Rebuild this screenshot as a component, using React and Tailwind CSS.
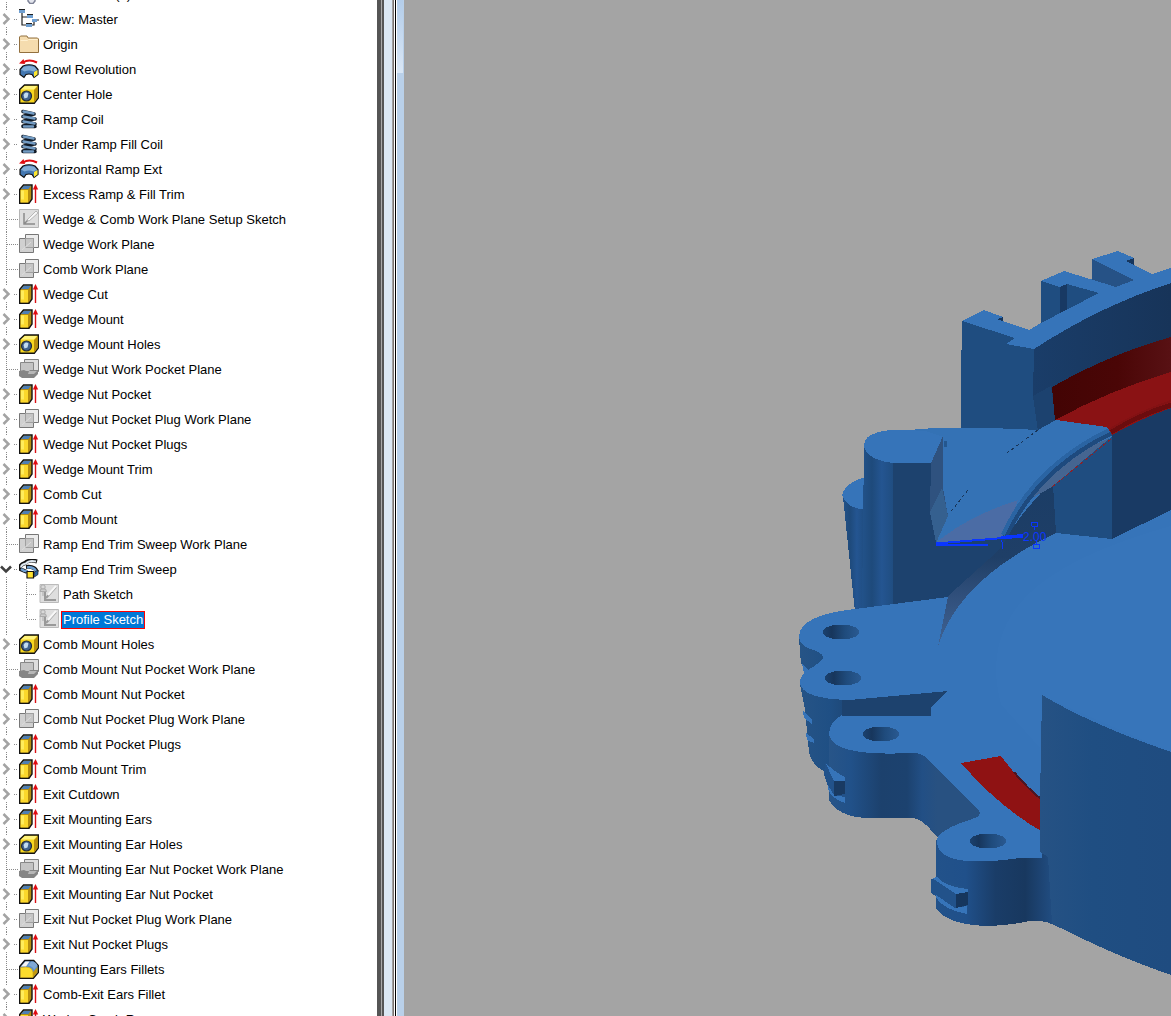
import React from 'react';

const tree = [
  { label: 'Solid Bodies(1)', icon: 'bodies', expand: true },
  { label: 'View: Master', icon: 'view', expand: true },
  { label: 'Origin', icon: 'folder', expand: true },
  { label: 'Bowl Revolution', icon: 'revolve', expand: true },
  { label: 'Center Hole', icon: 'hole', expand: true },
  { label: 'Ramp Coil', icon: 'coil', expand: true },
  { label: 'Under Ramp Fill Coil', icon: 'coil', expand: true },
  { label: 'Horizontal Ramp Ext', icon: 'revolve', expand: true },
  { label: 'Excess Ramp & Fill Trim', icon: 'extrude', expand: true },
  { label: 'Wedge & Comb Work Plane Setup Sketch', icon: 'sketch' },
  { label: 'Wedge Work Plane', icon: 'plane' },
  { label: 'Comb Work Plane', icon: 'plane' },
  { label: 'Wedge Cut', icon: 'extrude', expand: true },
  { label: 'Wedge Mount', icon: 'extrude', expand: true },
  { label: 'Wedge Mount Holes', icon: 'hole', expand: true },
  { label: 'Wedge Nut Work Pocket Plane', icon: 'planeBody' },
  { label: 'Wedge Nut Pocket', icon: 'extrude', expand: true },
  { label: 'Wedge Nut Pocket Plug Work Plane', icon: 'plane', expand: true },
  { label: 'Wedge Nut Pocket Plugs', icon: 'extrude', expand: true },
  { label: 'Wedge Mount Trim', icon: 'extrude', expand: true },
  { label: 'Comb Cut', icon: 'extrude', expand: true },
  { label: 'Comb Mount', icon: 'extrude', expand: true },
  { label: 'Ramp End Trim Sweep Work Plane', icon: 'plane' },
  {
    label: 'Ramp End Trim Sweep',
    icon: 'sweep',
    expand: true,
    children: [
      { label: 'Path Sketch', icon: 'sharedSketch' },
      { label: 'Profile Sketch', icon: 'sharedSketch', selected: true },
    ],
  },
  { label: 'Comb Mount Holes', icon: 'hole', expand: true },
  { label: 'Comb Mount Nut Pocket Work Plane', icon: 'planeBody' },
  { label: 'Comb Mount Nut Pocket', icon: 'extrude', expand: true },
  { label: 'Comb Nut Pocket Plug Work Plane', icon: 'plane', expand: true },
  { label: 'Comb Nut Pocket Plugs', icon: 'extrude', expand: true },
  { label: 'Comb Mount Trim', icon: 'extrude', expand: true },
  { label: 'Exit Cutdown', icon: 'extrude', expand: true },
  { label: 'Exit Mounting Ears', icon: 'extrude', expand: true },
  { label: 'Exit Mounting Ear Holes', icon: 'hole', expand: true },
  { label: 'Exit Mounting Ear Nut Pocket Work Plane', icon: 'planeBody' },
  { label: 'Exit Mounting Ear Nut Pocket', icon: 'extrude', expand: true },
  { label: 'Exit Nut Pocket Plug Work Plane', icon: 'plane', expand: true },
  { label: 'Exit Nut Pocket Plugs', icon: 'extrude', expand: true },
  { label: 'Mounting Ears Fillets', icon: 'fillet' },
  { label: 'Comb-Exit Ears Fillet', icon: 'extrude', expand: true },
  { label: 'Wedge Comb Ramp', icon: 'extrude', expand: true },
];

const icons = {
  bodies: (
    <path d="M2 3h8v8H2zM9 12v5l2 2.500h3l2-2.500v-5z" fill="#e4e6ee" stroke="#7d8296" strokeWidth="1.5" />
  ),
  view: (
    <>
      <path d="M3 4v12h4M3 8h5M14 11h6M13 16h2v-4" fill="none" stroke="#222" strokeWidth="1.2" />
      <path d="M0 1h6v3H0zM8 6h6v3H8zM7 15h6v3H7zM13 10h5v3h-5z" fill="#6f9fd0" />
      <path d="M0 .5h6M8 5.5h6M7 14.5h6" stroke="#222" />
    </>
  ),
  folder: (
    <>
      <path d="M.5 18.500V3l1-1H8l1 2h9.500l1 1v13.500z" fill="#f5dcae" stroke="#92703f" />
      <path d="M1.500 6.500h7l1-1h9" fill="none" stroke="#fff0cf" />
    </>
  ),
  revolve: (
    <>
      <path d="M4 3.500Q10-.5 18 3.500" fill="none" stroke="#e00d12" strokeWidth="2" />
      <path d="M0 4.500L4.500 0 6 5z" fill="#e00d12" />
      <path d="M1 10.500L4 7q6-2.500 12 0l3 3.500v5L15 18.500l-2-3q-3-1-6 0l-2 3L1 15.500z" fill="#4377b0" stroke="#111" strokeWidth="1.200" />
      <path d="M2 10.500L4.500 8q5.500-2 11 0l2.500 2.500-3.500 2q-4.500-2-9 0z" fill="#83add6" />
      <path d="M15 13l3.500-2v4.500L15 18z" fill="#ffe72d" />
    </>
  ),
  hole: (
    <>
      <path d="M.7 5.500l4.800-4.500h13.800v13l-4 5.300H.7z" fill="#f6d51e" stroke="#111" strokeWidth="1.400" />
      <path d="M2 5.500l4-3.500h12l-3 3.500z" fill="#fff37c" />
      <path d="M15 6l3.500-3.500V14L15 18.500z" fill="#b98d0d" />
      <circle cx="7.500" cy="12" r="5" fill="#3f628e" stroke="#222b3a" strokeWidth="1.200" />
      <path d="M4.500 11q2-4 5-1.500l-1 4-3 1z" fill="#c3dcf0" />
    </>
  ),
  coil: (
    <>
      <path d="M4 2.500L15 5M15 5L5 7M4 7.500L16 10M15 10L5 12M4 12.500L16 15M15 15L4 17M4 17.500h12" fill="none" stroke="#111a26" strokeWidth="3.600" strokeLinecap="round" />
      <path d="M4.500 2.500L14.500 4.500M4.500 7.500L15.500 9.500M4.500 12.500L15.500 14.500M5 17.500h9" fill="none" stroke="#739cc4" strokeWidth="2.400" strokeLinecap="round" />
    </>
  ),
  extrude: (
    <>
      <path d="M.7 5.500L4.500 1H13v14l-3 4.300H.7z" fill="#b48c10" stroke="#111" strokeWidth="1.400" />
      <path d="M2 5l3-3.300h7L9.500 5z" fill="#4d7fb6" />
      <path d="M1.500 6H9v12.500H1.500z" fill="#fbd72b" />
      <path d="M2 6.500h3v9H2z" fill="#ffec5c" />
      <path d="M16.500 19V3" stroke="#da1015" strokeWidth="1.400" />
      <path d="M13.800 5.500L16.500 0l2.700 5.500z" fill="#e00d12" />
    </>
  ),
  sketch: (
    <>
      <path d="M.5.500h19v18H.5z" fill="#dedede" stroke="#b5b5b5" />
      <path d="M5 4v11h11M5 15l5-5" fill="none" stroke="#8b8b8b" strokeWidth="1.500" />
      <path d="M8 11l9-9 2 2-9 8z" fill="#f7f7f7" stroke="#aaa" strokeWidth=".8" />
    </>
  ),
  plane: (
    <>
      <path d="M6.500.5h13v13h-13z" fill="#ececec" stroke="#777" />
      <path d="M.5 4.500h14v14H.5z" fill="#d0d0d0" stroke="#777" />
      <path d="M6.500 4.500h8v9h-8z" fill="#c6c6c6" stroke="#a0a0a0" />
      <path d="M3 16l9-8" stroke="#ddd" />
    </>
  ),
  planeBody: (
    <>
      <path d="M5.500.5h14v12h-14z" fill="#dedede" stroke="#808080" />
      <path d="M1.500 3.500h13v9h-13z" fill="#c4c4c4" stroke="#888" />
      <path d="M0 12l5-1 4 2 2-2h8v4l-4 4H3l-3-2z" fill="#858585" />
      <path d="M10 12h8l-3 3H9z" fill="#b7b7b7" />
    </>
  ),
  sweep: (
    <>
      <path d="M18 2.500Q10 0 6 4q-6 2-5 6l7 3M7 8q9-1 11 5" fill="none" stroke="#111" strokeWidth="4" strokeLinejoin="round" />
      <path d="M17 2.500Q10 1 7 4.500q-5 1-5 4" fill="none" stroke="#dfe9f2" strokeWidth="2" />
      <path d="M2 10q3 2.500 7 2.500M8 8.500q6-1 9 3.500v3" fill="none" stroke="#6d9ed0" strokeWidth="2.400" />
      <path d="M8 12.500h6.500v6.500H8z" fill="#ffe22f" stroke="#111" strokeWidth="1.200" />
      <path d="M15.500 13l3.500-2v4.500L15.500 18z" fill="#2c629d" stroke="#111" strokeWidth=".6" />
    </>
  ),
  sharedSketch: (
    <>
      <path d="M1 .5h18.500v18H1z" fill="#dedede" stroke="#bbb" />
      <path d="M6 8v8h11M7 14l10-11" fill="none" stroke="#999" strokeWidth="2" />
      <circle cx="4" cy="3" r="2.200" fill="#d9d9d9" stroke="#aaa" />
      <path d="M1 7.500h6.500L6.500 5h-4.500zM4 7v5" fill="#ccc" stroke="#aaa" />
      <path d="M9 11l8-9" stroke="#f8f8f8" strokeWidth="2" />
    </>
  ),
  fillet: (
    <>
      <path d="M.7 7.500l5-6h9l4.600 5v7l-5 5.800H.7z" fill="#5d8fc7" stroke="#111" strokeWidth="1.400" />
      <path d="M2 7.500l4.500-5h4L7 7.500z" fill="#f5f5f5" />
      <path d="M9 6.500l3.500-4q4.500 0 6 4l-3.500 4.500q-1-4-6-4.500z" fill="#7fa8d6" />
      <path d="M14 13l4.500-5v5.500L14 18.500z" fill="#c39a10" />
      <path d="M1.500 8.500q12-2 12.500 5v5H1.500z" fill="#fbdc2d" stroke="#c79d12" strokeWidth=".6" />
    </>
  ),
};

function FeatureIcon({ name }) {
  return (
    <svg className="mb-0.5 h-5 w-5 shrink-0" viewBox="0 0 20 20" aria-hidden="true">
      {icons[name]}
    </svg>
  );
}

function Branch({ expand, open }) {
  return (
    <svg className="h-[25px] w-[19px] shrink-0" viewBox="0 0 19 25" shapeRendering="crispEdges">
      <g stroke="#8a8a8a" strokeDasharray="1 1">
        <path d={expand ? 'M6.500 0v4M6.500 20v5' : 'M6.500 0v25'} />
        <path d={expand ? 'M14 12.500h4' : 'M7 12.500h11'} />
      </g>
      {expand && (
        <path
          d={open ? 'M1 9.500l5 5 5-5' : 'M3.500 7l5 5-5 5'}
          fill="none"
          stroke={open ? '#404040' : '#a3a3a3'}
          strokeWidth="2.5"
          shapeRendering="auto"
        />
      )}
    </svg>
  );
}

function ChildBranch({ last }) {
  return (
    <svg className="h-[25px] w-[39px] shrink-0" viewBox="0 0 39 25" shapeRendering="crispEdges">
      <g stroke="#8a8a8a" strokeDasharray="1 1">
        <path d="M6.500 0v25" />
        <path d={last ? 'M26.500 0v12' : 'M26.500 0v25'} />
        <path d="M27 12.500h10" />
      </g>
    </svg>
  );
}

function TreeRow({ item, child, last }) {
  return (
    <div className="flex h-[25px] items-center whitespace-nowrap">
      {child && <ChildBranch last={last} />}
      {!child && item.expand && (
        <button aria-label={`Toggle ${item.label}`} className="shrink-0">
          <Branch expand open={Boolean(item.children)} />
        </button>
      )}
      {!child && !item.expand && <Branch />}
      <FeatureIcon name={item.icon} />
      {item.selected ? (
        <button className="ml-0.5 h-[18px] border border-[#ff0000] bg-[#0078d7] px-px text-white">
          {item.label}
        </button>
      ) : (
        <button className="ml-1">{item.label}</button>
      )}
    </div>
  );
}

function FeatureTree() {
  return (
    <aside className="w-[377px] shrink-0 overflow-hidden bg-white text-[13px] leading-4 text-black">
      <ul className="-mt-[18px]">
        {tree.map((item) => (
          <li key={item.label}>
            <TreeRow item={item} />
            {item.children && (
              <ul>
                {item.children.map((c, i) => (
                  <li key={c.label}>
                    <TreeRow item={c} child last={i === item.children.length - 1} />
                  </li>
                ))}
              </ul>
            )}
          </li>
        ))}
      </ul>
    </aside>
  );
}

function Splitter() {
  return (
    <div className="flex shrink-0">
      <div className="w-1 bg-[#555555]" />
      <div className="w-px bg-[#a8a8a8]" />
      <div className="w-0.5 bg-[#555555]" />
      <div className="w-2 bg-[#dbe7f3]" />
      <div className="w-px bg-[#a0a0a0]" />
      <div className="w-px bg-[#7c7472]" />
      <div className="w-px bg-white" />
      <div className="w-px bg-black" />
      <div className="w-px bg-white" />
      <div className="w-[7px] bg-[#b9d0e9]">
        <div className="h-[73px] w-1.5 bg-linear-to-b from-[#b3cdea] to-[#dae7f5]" />
      </div>
    </div>
  );
}

function Hole({ cx, cy }) {
  return <ellipse cx={cx} cy={cy} rx="18.500" ry="7.500" fill="url(#bore)" />;
}

function Model() {
  return (
    <svg
      className="block h-full w-full"
      viewBox="404 0 767 1016"
      preserveAspectRatio="xMinYMin slice"
      shapeRendering="crispEdges"
      role="img"
      aria-label="Bowl model"
    >
      <defs>
        <linearGradient id="bore">
          <stop offset="0" stopColor="#1b4270" />
          <stop offset=".25" stopColor="#17365c" />
          <stop offset=".6" stopColor="#1f4b7c" />
          <stop offset="1" stopColor="#2a5a92" />
        </linearGradient>
        <linearGradient id="cyl">
          <stop offset="0" stopColor="#22528a" />
          <stop offset=".3" stopColor="#1e4a7b" />
          <stop offset=".6" stopColor="#245591" />
          <stop offset="1" stopColor="#1f4c7e" />
        </linearGradient>
        <linearGradient id="earA" gradientUnits="userSpaceOnUse" x1="800" y1="0" x2="860" y2="0">
          <stop offset="0" stopColor="#265486" />
          <stop offset=".5" stopColor="#1f4f84" />
          <stop offset="1" stopColor="#1d426e" />
        </linearGradient>
        <linearGradient id="earB" gradientUnits="userSpaceOnUse" x1="828" y1="0" x2="980" y2="0">
          <stop offset="0" stopColor="#285588" />
          <stop offset=".15" stopColor="#215189" />
          <stop offset=".35" stopColor="#1c416d" />
          <stop offset=".52" stopColor="#1c426f" />
          <stop offset=".62" stopColor="#224f85" />
          <stop offset=".72" stopColor="#285181" />
          <stop offset="1" stopColor="#285181" />
        </linearGradient>
        <linearGradient id="earC" gradientUnits="userSpaceOnUse" x1="936" y1="0" x2="1055" y2="0">
          <stop offset="0" stopColor="#22528a" />
          <stop offset=".25" stopColor="#20508a" />
          <stop offset=".5" stopColor="#1a3d68" />
          <stop offset=".75" stopColor="#18385f" />
          <stop offset="1" stopColor="#224f85" />
        </linearGradient>
        <linearGradient id="wall">
          <stop offset="0" stopColor="#1a3d69" />
          <stop offset="1" stopColor="#173459" />
        </linearGradient>
        <linearGradient id="redWall">
          <stop offset="0" stopColor="#430404" />
          <stop offset=".55" stopColor="#4a0606" />
          <stop offset="1" stopColor="#581114" />
        </linearGradient>
        <linearGradient id="outer">
          <stop offset="0" stopColor="#265284" />
          <stop offset=".4" stopColor="#1f4e82" />
          <stop offset="1" stopColor="#1f4c80" />
        </linearGradient>
        <linearGradient id="lip" x1="0" y1="0" x2="0" y2="1">
          <stop offset="0" stopColor="#1b3d66" />
          <stop offset=".45" stopColor="#1f3f67" />
          <stop offset=".7" stopColor="#31507c" />
          <stop offset="1" stopColor="#3f6394" />
        </linearGradient>
      </defs>

      {/* comb teeth and rear wall */}
      <path d="M962 321L1015 336 1034 345V395L1038 432H961V380z" fill="#1f4d80" />
      <path d="M1041 281L1099 293 1041 326z" fill="#1f4d80" />
      <path d="M1060 287L1067 284V312L1060 316z" fill="#183963" />
      <path d="M1067 284L1102 293 1067 313z" fill="#1f4d80" />
      <path d="M1092 259L1136 279 1116 288 1092 281z" fill="#265286" />
      <path d="M1125 261L1134 258V266z" fill="#16365d" />
      <path d="M995 319L1003 317V322z" fill="#16365d" />
      <path d="M962 321L984 310 1003 317 997 319 1029 330 1041 323 1099 293 1067 284 1060 287 1041 281 1064 271 1116 287 1134 280 1092 259 1118 251 1134 258 1126 261 1152 274 1171 268V284Q1100 306 1034 349L1006 344 1015 338z" fill="#3674b9" />
      <path d="M1034 349Q1100 306 1171 283V345L1060 400 1058 421 1038 431 1033 395z" fill="url(#wall)" />
      <path d="M1033 396L1051 386 1056 421 1038 431z" fill="#1c426f" />

      {/* right hand block and bowl floor */}
      <path d="M1112 430L1171 400V514L1112 541z" fill="#193a64" />
      <path d="M1112 432V540L1054 534 1050 485z" fill="#1f4d80" />
      <path d="M1056 533L1112 539 1171 510V760H1042L1000 860 940 846 931 700 936 640 975 575 1030 535z" fill="#3674b9" />
      <path d="M1171 526Q1050 560 1015 610T1010 730Q1025 765 1040 780V695L1171 752z" fill="#3775ba" />

      {/* red ramp on the bowl wall */}
      <path d="M1052 387Q1110 354 1171 337V375Q1110 394 1055 421z" fill="url(#redWall)" />
      <path d="M1055 420Q1110 390 1171 372V408Q1140 419 1112 435L1105 427z" fill="#8a1214" />
      <path d="M1111 432Q1138 415 1171 405" fill="none" stroke="#6b0c0e" strokeWidth="5" />
      <path d="M1110 429Q1138 412 1171 401" fill="none" stroke="#831113" strokeWidth="2" />

      {/* posts */}
      <path d="M843 497L866 490V612H855z" fill="url(#cyl)" />
      <path d="M842 495Q846 482 866 477V510Q846 508 842 495z" fill="#3674b9" />
      <path d="M864 445H895V610H862z" fill="url(#cyl)" />
      <path d="M893 455H933L936 543 1004 537 1034 496 1003 547 948 600 893 605z" fill="#1d426e" />
      <path d="M1000 549L1034 494 1053 485 1056 533Q960 578 938 646 938 622 947 597z" fill="url(#lip)" />
      <path d="M903 431Q940 425 1038 430L1056 420 1107 427 1112 437Q1046 475 1006 538L936 543 931 463z" fill="#3472b5" />
      <path d="M864 445C864 431 892 429 905 430L926 431 943 437 931 463H893C875 461 864 454 864 445z" fill="#3674b9" />
      <path d="M943 436L931 463 930 510 936 543 948 516 943 488z" fill="#2f527f" />
      <path d="M942 488L948 516 936 543 930 512z" fill="#35608f" />
      <path d="M944 441h3v6h-3z" fill="#24578f" />

      {/* sweep section */}
      <path d="M936 543Q966 517 1018 500L1004 537z" fill="#4b6ca5" />
      <path d="M1111 437L1052 487 1030 499Q1054 462 1111 437z" fill="#456591" />
      <path d="M1111 433Q1036 470 1005 538" fill="none" stroke="#1e4a7e" strokeWidth="5" />
      <path d="M1109 430Q1033 467 1003 535" fill="none" stroke="#2a64a3" strokeWidth="4" />
      <path d="M1111 439L1052 487" stroke="#8a2028" strokeDasharray="4 2" />
      <path d="M1038 430L1007 453M968 490L949 514" stroke="#183457" strokeDasharray="3 3" />

      {/* ear sides */}
      <path d="M799 638L830 640V676H842V770L826 772Q812 766 809 752L805 710 800 684 807 670 801 664z" fill="url(#earA)" />
      <path d="M829 735V800Q838 817 868 818H912Q922 818 936 836L945 842 985 812 925 750z" fill="url(#earB)" />
      <path d="M936 840V908Q946 924 985 926 1005 926 1030 921 1045 919 1060 928V850z" fill="url(#earC)" />

      {/* ear tops */}
      <path d="M799 636Q800 615 855 609L948 597 938 646 990 690 948 691 850 700Q802 699 800 683 800 675 808 670 823 661 823 657 822 652 810 649 799 645 799 636z" fill="#3674b9" />
      <path d="M931 692H990L1042 750V858L1020 858Q935 870 937 840 938 830 972 819 982 816 979 811L928 759Q923 753 912 753 830 757 829 733 830 722 842 715H931z" fill="#3674b9" />
      <path d="M842 700L850 700 948 691 931 707V716H842z" fill="#1d426e" />
      <Hole cx={841} cy={632} />
      <Hole cx={843} cy={678} />
      <Hole cx={881} cy={734} />
      <Hole cx={988} cy={841} />

      {/* nut pocket tabs */}
      <path d="M803 711L812 719V724L804 718zM806 733L814 739V743L807 740zM802 664L809 671 804 673z" fill="#3674b9" />
      <path d="M825 763L845 779V802H840L831 795 824 775z" fill="#22528a" />
      <path d="M825 762Q834 772 845 777V781H834zM828 785L834 795 845 797V803Q832 799 828 789z" fill="#3674b9" />
      <path d="M834 781H845V794L834 796z" fill="#193a62" />
      <path d="M931 879L937 877 968 889V907L955 908 931 893z" fill="#22528a" />
      <path d="M932 878L937 877Q946 887 968 889L968 892 956 894zM936 895L955 908 967 906V914Q942 909 936 897z" fill="#3674b9" />
      <path d="M956 894L968 892V905L956 908z" fill="#16365d" />

      {/* red exit ramp and outer wall */}
      <path d="M961 763L1001 756Q1022 784 1041 800V831Q998 806 961 763z" fill="#8f1213" />
      <path d="M1014 772Q1027 788 1041 799" fill="none" stroke="#4d1623" strokeWidth="2" />
      <path d="M1042 695Q1090 724 1171 752V975Q1105 952 1052 923L1048 857 1040 852V800z" fill="url(#outer)" />

      {/* sketch geometry */}
      <g fill="none" stroke="#0a36ff">
        <path d="M936 543.500L1003 538M936 544.500H988M1001 537L1023 535M1001 538L1023 537" strokeWidth="2" />
        <path d="M1001 540q3 4 1 9M1031 522h6v4h-5zM1034 526v4M1036 540v5M1033 544h6v4h-6z" />
      </g>
      <text x="1023" y="541" fontSize="12" fill="#0a36ff">2.00</text>
    </svg>
  );
}

export default function App() {
  return (
    <div className="flex h-screen overflow-hidden bg-white font-['Liberation_Sans',Arial,sans-serif]">
      <FeatureTree />
      <Splitter />
      <main className="min-w-0 flex-1 bg-[#a4a4a4]">
        <Model />
      </main>
    </div>
  );
}
